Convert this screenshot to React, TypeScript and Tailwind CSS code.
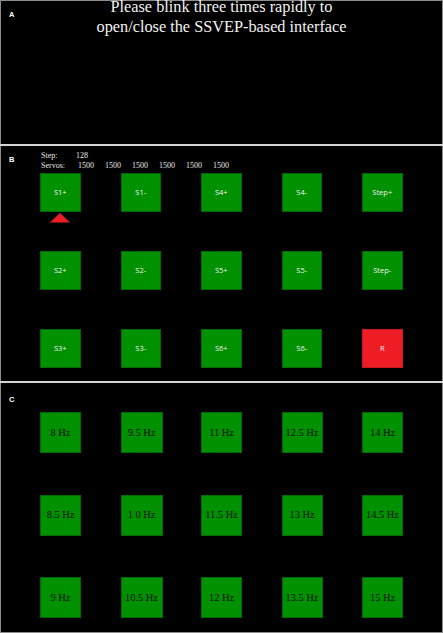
import React from "react";

const serif = { fontFamily: '"Liberation Serif", "Times New Roman", serif' };

const bRows = [
  ["S1+", "S1-", "S4+", "S4-", "Step+"],
  ["S2+", "S2-", "S5+", "S5-", "Step-"],
  ["S3+", "S3-", "S6+", "S6-", "R"],
];

const cRows = [
  ["8 Hz", "9.5 Hz", "11 Hz", "12.5 Hz", "14 Hz"],
  ["8.5 Hz", "1 0 Hz", "11.5 Hz", "13 Hz", "14.5 Hz"],
  ["9 Hz", "10.5 Hz", "12 Hz", "13.5 Hz", "15 Hz"],
];

function Label({ t, top }: { t: string; top: string }) {
  return (
    <span
      className={`absolute left-[8px] ${top} text-[7.5px] font-bold leading-none text-white`}
      style={{ fontFamily: '"Liberation Sans", Arial, sans-serif' }}
    >
      {t}
    </span>
  );
}

export default function App() {
  return (
    <div className="flex h-[633px] w-[443px] flex-col gap-[2px] overflow-hidden bg-[#d4d4d4] antialiased">
      {/* Panel A */}
      <div className="relative h-[144px] shrink-0 border-x border-t border-[#8c8c8c] bg-black">
        <Label t="A" top="top-[10px]" />
        <div
          className="-mt-[4px] text-center text-[16.3px] leading-[20px] text-[#f2f2f2]"
          style={serif}
        >
          <div>Please blink three times rapidly to</div>
          <div>open/close the SSVEP-based interface</div>
        </div>
      </div>

      {/* Panel B */}
      <div className="relative h-[235px] shrink-0 border-x border-[#8c8c8c] bg-black">
        <Label t="B" top="top-[10px]" />
        <div className="pl-[40px] pt-[5px] text-[8px] leading-[10px] text-[#e8e8e8]" style={serif}>
          <div className="flex">
            <span className="w-[35px]">Step:</span>
            <span>128</span>
          </div>
          <div className="flex">
            <span className="w-[37px]">Servos:</span>
            {[0, 1, 2, 3, 4, 5].map((i) => (
              <span key={i} className="w-[27px]">
                1500
              </span>
            ))}
          </div>
        </div>
        <div className="mt-[2px] flex flex-col gap-[39px] pl-[39px]">
          {bRows.map((row, ri) => (
            <div key={ri} className="grid grid-cols-[repeat(5,80.5px)]">
              {row.map((t, ci) => (
                <div key={t} className="relative">
                  <div
                    className={`flex h-[39px] w-[40.5px] items-center justify-center border ${
                      t === "R" ? "border-[#c81820] bg-[#ee1c25]" : "border-[#006a00] bg-[#009100]"
                    } text-[7.5px] text-[#f0f0f0]`}
                    style={{ fontFamily: '"Open Sans", "Liberation Sans", sans-serif' }}
                  >
                    {t}
                  </div>
                  {ri === 0 && ci === 0 && (
                    <svg
                      className="absolute left-[10px] top-[40px]"
                      width="20"
                      height="10"
                      viewBox="0 0 20 10"
                    >
                      <polygon points="10,0 20,9.5 0,9.5" fill="#ee1c25" />
                    </svg>
                  )}
                </div>
              ))}
            </div>
          ))}
        </div>
      </div>

      {/* Panel C */}
      <div className="relative min-h-0 flex-1 border-x border-b border-[#8c8c8c] bg-black">
        <Label t="C" top="top-[13px]" />
        <div className="flex flex-col gap-[41.5px] pl-[39px] pt-[29px]">
          {cRows.map((row, ri) => (
            <div key={ri} className="grid grid-cols-[repeat(5,80.5px)]">
              {row.map((t, ci) => (
                <div key={ci}>
                  <div
                    className={`flex h-[41px] ${
                      ci === 1 ? "w-[42px]" : "w-[41px]"
                    } items-center justify-center whitespace-nowrap border border-[#006a00] bg-[#009100] text-[10.4px] text-[#0a0a0a]`}
                    style={serif}
                  >
                    {t}
                  </div>
                </div>
              ))}
            </div>
          ))}
        </div>
      </div>
    </div>
  );
}
